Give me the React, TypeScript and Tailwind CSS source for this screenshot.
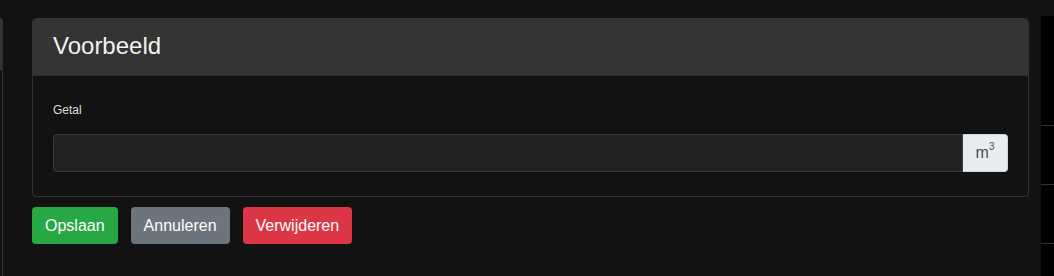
export default function App() {
  return (
    <div
      className="flex h-[276px] w-[1054px] overflow-hidden bg-[#121212] text-[#e9e9e9]"
      style={{ fontFamily: '"Liberation Sans", Arial, sans-serif' }}
    >
      {/* edge of the neighbouring card on the left */}
      <div className="mt-[18px] flex w-[3px] shrink-0 flex-col rounded-tr border-r border-[#333]">
        <div className="h-[52px] bg-[#343434]" />
      </div>

      <div className="flex w-[1038px] shrink-0 flex-col pt-[18px] pl-[29px] pr-[12px]">
        <div className="rounded border border-[#333] bg-[#121212]">
          <div className="flex h-[57px] items-center rounded-t bg-[#343434] px-[20px] pb-[2px] border-b border-[#2a2a2a]">
            <h4 className="text-[24px] leading-none text-[#f2f2f2]">Voorbeeld</h4>
          </div>
          <div className="px-[20px] pt-[27px] pb-[24px]">
            <label className="block text-[12px] leading-[15px] text-[#dcdcdc]">Getal</label>
            <div className="mt-[16px] flex h-[38px]">
              <input
                type="text"
                className="h-full flex-1 rounded-l border border-[#3a3a3a] bg-[#222] px-3 text-[16px] text-white outline-none"
              />
              <span className="flex w-[45px] items-center justify-center rounded-r border border-l-0 border-[#ced4da] bg-[#e9ecef] text-[16px] text-[#495057]">
                m<sup className="text-[10px] -top-[0.6em]">3</sup>
              </span>
            </div>
          </div>
        </div>

        <div className="mt-[10px] flex gap-[13px]">
          <button className="h-[37px] rounded bg-[#28a745] px-[13px] text-[16px] text-white">Opslaan</button>
          <button className="h-[37px] rounded bg-[#6c757d] px-[13px] text-[16px] text-white">Annuleren</button>
          <button className="h-[37px] rounded bg-[#dc3545] px-[13px] text-[16px] text-white">Verwijderen</button>
        </div>
      </div>

      {/* edge of the table on the right */}
      <div className="mt-[16px] flex flex-1 flex-col bg-black">
        <div className="h-[110px] border-b border-[#333]" />
        <div className="h-[59px] border-b border-[#333]" />
        <div className="h-[59px] border-b border-[#333]" />
      </div>
    </div>
  );
}
